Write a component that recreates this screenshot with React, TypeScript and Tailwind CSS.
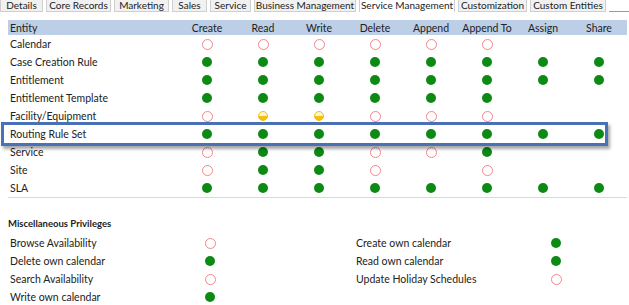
type Mark = 'g' | 'r' | 'y' | '';

const tabs = [
  { label: 'Details', w: 'w-[43px]' },
  { label: 'Core Records', w: 'w-[65px]' },
  { label: 'Marketing', w: 'w-[55px]' },
  { label: 'Sales', w: 'w-[35px]' },
  { label: 'Service', w: 'w-[41px]' },
  { label: 'Business Management', w: 'w-[102px]' },
  { label: 'Service Management', w: 'w-[96px]', active: true },
  { label: 'Customization', w: 'w-[69px]' },
  { label: 'Custom Entities', w: 'w-[76px]' },
];

const columns = ['Create', 'Read', 'Write', 'Delete', 'Append', 'Append To', 'Assign', 'Share'];

const rows: { name: string; marks: Mark[] }[] = [
  { name: 'Calendar', marks: ['r', 'r', 'r', 'r', 'r', 'r', '', ''] },
  { name: 'Case Creation Rule', marks: ['g', 'g', 'g', 'g', 'g', 'g', 'g', 'g'] },
  { name: 'Entitlement', marks: ['g', 'g', 'g', 'g', 'g', 'g', 'g', 'g'] },
  { name: 'Entitlement Template', marks: ['g', 'g', 'g', 'g', 'g', 'g', '', ''] },
  { name: 'Facility/Equipment', marks: ['r', 'y', 'y', 'r', 'r', 'r', '', ''] },
  { name: 'Routing Rule Set', marks: ['g', 'g', 'g', 'g', 'g', 'g', 'g', 'g'] },
  { name: 'Service', marks: ['r', 'g', 'g', 'r', 'r', 'g', '', ''] },
  { name: 'Site', marks: ['r', 'g', 'g', 'r', '', 'r', '', ''] },
  { name: 'SLA', marks: ['g', 'g', 'g', 'g', 'g', 'g', 'g', 'g'] },
];

const miscLeft: [string, Mark][] = [
  ['Browse Availability', 'r'],
  ['Delete own calendar', 'g'],
  ['Search Availability', 'r'],
  ['Write own calendar', 'g'],
];
const miscRight: [string, Mark][] = [
  ['Create own calendar', 'g'],
  ['Read own calendar', 'g'],
  ['Update Holiday Schedules', 'r'],
];

function Dot({ mark }: { mark: Mark }) {
  if (mark === 'g') return <span className="block h-[10px] w-[10px] rounded-full bg-[#0c8a14]" />;
  if (mark === 'r') return <span className="block h-[11px] w-[11px] rounded-full border-[1.5px] border-[#ec8a8f] bg-white" />;
  if (mark === 'y')
    return (
      <span className="block h-[10px] w-[10px] overflow-hidden rounded-full border border-[#f0bd12] bg-[linear-gradient(to_bottom,#fff6cf_45%,#f2c10f_45%)]" />
    );
  return null;
}

function MiscRow({ label, mark }: { label: string; mark: Mark }) {
  return (
    <div className="flex h-[18px] items-center">
      <span className="w-[192px] whitespace-nowrap pl-[2px] pt-[2px]">{label}</span>
      <span className="flex w-[20px] justify-center">
        <Dot mark={mark} />
      </span>
    </div>
  );
}

export default function App() {
  return (
    <div className="relative h-[305px] w-[629px] overflow-hidden bg-white font-['Segoe_UI',Lato,sans-serif] text-[10.5px] text-[#222]">
      {/* tab strip */}
      <div className="flex h-[12px] gap-[3px]">
        {tabs.map((tb) => (
          <div
            key={tb.label}
            className={`${tb.w} flex h-[12px] shrink-0 justify-center whitespace-nowrap border-x border-[#cfcfcf] text-[10px] leading-[10px] ${
              tb.active ? 'bg-white' : 'border-b bg-[#f1f1f1]'
            }`}
          >
            {tb.label}
          </div>
        ))}
        <div className="h-[12px] flex-1 border-b border-[#9a9a9a]" />
      </div>

      {/* entity table */}
      <div className="mx-[8px] mt-[8px] w-[619px]">
        <div className="grid h-[15px] grid-cols-[171px_repeat(8,56px)] items-center bg-[#bccfe6] pt-[1px]">
          <span className="pl-[2px]">Entity</span>
          {columns.map((c) => (
            <span key={c} className="text-center">{c}</span>
          ))}
        </div>
        {rows.map((r) => (
          <div key={r.name} className="grid h-[18px] grid-cols-[171px_repeat(8,56px)] items-center">
            <span className="pl-[2px] pt-[2px]">{r.name}</span>
            {r.marks.map((m, i) => (
              <span key={i} className="flex justify-center">
                <Dot mark={m} />
              </span>
            ))}
          </div>
        ))}
        <div className="border-t border-[#d9d9d9]" />
      </div>

      {/* misc privileges */}
      <div className="mx-[8px] mt-[15px] h-[18px] pt-[2px] text-[9.5px] font-bold leading-[18px]">Miscellaneous Privileges</div>
      <div className="ml-[8px] mt-[3px] flex gap-[134px]">
        <div className="flex flex-col">
          {miscLeft.map(([l, m]) => (
            <MiscRow key={l} label={l} mark={m} />
          ))}
        </div>
        <div className="flex flex-col">
          {miscRight.map(([l, m]) => (
            <MiscRow key={l} label={l} mark={m} />
          ))}
        </div>
      </div>

      {/* highlight annotation */}
      <div className="absolute left-[1px] top-[122px] h-[24px] w-[607px] border-[3px] border-[#4a70b6] shadow-[2px_3px_3px_rgba(0,0,0,0.35)]" />
    </div>
  );
}
